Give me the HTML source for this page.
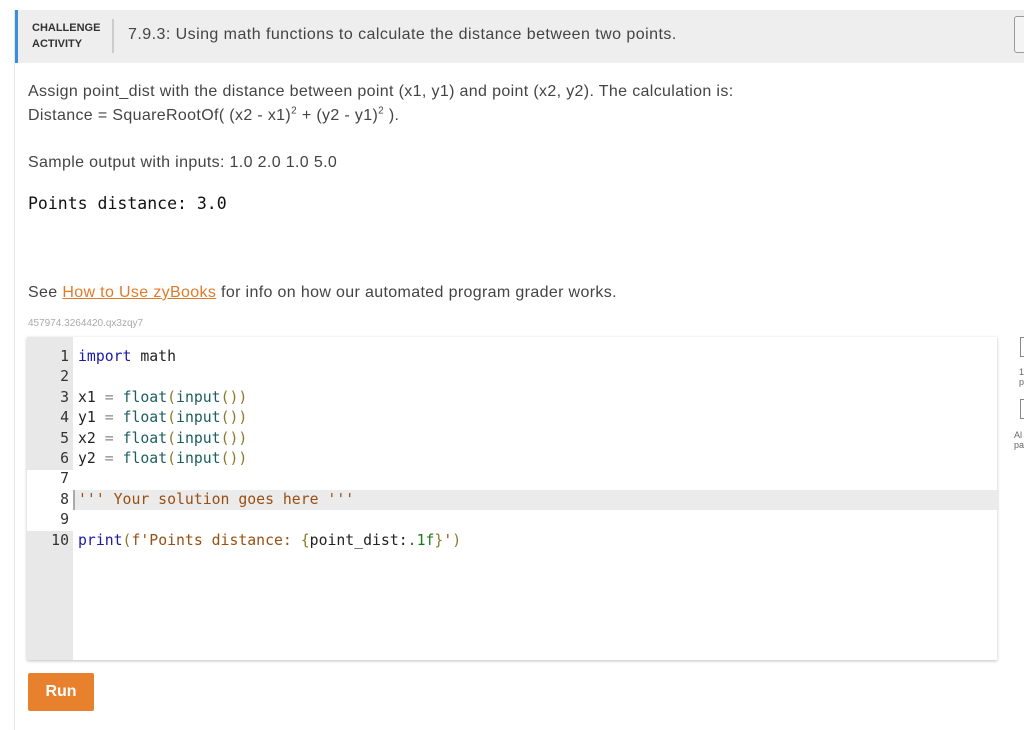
<!DOCTYPE html>
<html><head><style>
body{margin:0;width:1024px;height:720px;background:#fff;font-family:"Liberation Sans",sans-serif;overflow:hidden;position:relative;color:#333}
.card{position:absolute;left:14px;top:10px;width:1020px;height:720px;border-left:1px solid #e6e6e6}
.hdr{position:absolute;left:15px;top:10px;width:1009px;height:53px;background:#eeeeee;border-left:3px solid #3a8ee0;box-sizing:border-box}
.lab{position:absolute;left:14px;top:10px;font-size:11px;font-weight:bold;line-height:16px;color:#333}
.sep{position:absolute;left:94px;top:9px;width:2px;height:34px;background:#ccc}
.ttl{position:absolute;left:110px;top:16px;font-size:16px;color:#444;letter-spacing:0.45px}
.tb{position:absolute;left:1014px;top:16px;width:14px;height:35px;border:1px solid #999;border-radius:3px;background:#f4f4f4}
.t{position:absolute;left:28px;font-size:16px;color:#444;line-height:24px;letter-spacing:0.35px}
sup{font-size:10px;line-height:0}
.mono{font-family:"DejaVu Sans Mono","Liberation Mono",monospace;letter-spacing:0}
.ed{position:absolute;left:27px;top:337px;width:970px;height:323px;background:#fff;box-shadow:0 1px 3px rgba(0,0,0,.25)}
.gut{position:absolute;left:0;width:46px;background:#e8e8e8}
.ln{position:absolute;left:0;width:42px;text-align:right;font-size:14.8px;color:#333}
.cd{position:absolute;left:51px;font-size:14.8px;white-space:pre;color:#222}
.kw{color:#1a1aa6}.bi{color:#1c5e5e}.pa{color:#8a7a2a}.st{color:#9a4f12}.op{color:#888}
.run{position:absolute;left:28px;top:673px;width:66px;height:38px;background:#e8812e;color:#fff;font-weight:bold;font-size:16px;text-align:center;line-height:38px;border-radius:2px}
.side{position:absolute;left:1014px;font-size:9px;color:#666}
.bx{position:absolute;left:1020px;width:10px;height:18px;border:1px solid #888}
</style></head><body>
<div class="card"></div>
<div class="hdr">
<div class="lab">CHALLENGE<br>ACTIVITY</div>
<div class="sep"></div>
<div class="ttl">7.9.3: Using math functions to calculate the distance between two points.</div>
</div>
<div class="tb"></div>
<div class="t" style="top:80px">Assign point_dist with the distance between point (x1, y1) and point (x2, y2). The calculation is:<br>Distance = SquareRootOf( (x2 - x1)<sup>2</sup> + (y2 - y1)<sup>2</sup> ).</div>
<div class="t" style="top:151px">Sample output with inputs: 1.0 2.0 1.0 5.0</div>
<div class="t mono" style="top:192px;font-size:16.5px;color:#111">Points distance: 3.0</div>
<div class="t" style="top:281px">See <span style="color:#e07b2b;text-decoration:underline">How to Use zyBooks</span> for info on how our automated program grader works.</div>
<div class="t" style="top:317px;font-size:10px;color:#aaa;line-height:14px;letter-spacing:0">457974.3264420.qx3zqy7</div>
<div class="ed">
<div class="gut" style="top:0;height:133px"></div>
<div class="gut" style="top:194px;height:129px"></div>
<div style="position:absolute;left:46px;top:153px;width:924px;height:20px;background:#ebebeb;border-left:2px solid #aaa"></div>
<div class="ln mono" style="top:10px;line-height:20.4px">1<br>2<br>3<br>4<br>5<br>6<br>7<br>8<br>9<br>10</div>
<div class="cd mono" style="top:10px;line-height:20.4px"><span class="kw">import</span> math

x1 <span class="op">=</span> <span class="bi">float</span><span class="pa">(</span><span class="bi">input</span><span class="pa">())</span>
y1 <span class="op">=</span> <span class="bi">float</span><span class="pa">(</span><span class="bi">input</span><span class="pa">())</span>
x2 <span class="op">=</span> <span class="bi">float</span><span class="pa">(</span><span class="bi">input</span><span class="pa">())</span>
y2 <span class="op">=</span> <span class="bi">float</span><span class="pa">(</span><span class="bi">input</span><span class="pa">())</span>

<span class="st">''' Your solution goes here '''</span>

<span class="kw">print</span><span class="pa">(</span><span class="st">f'Points distance: </span><span class="pa">{</span>point_dist:<span style="color:#1a7a1a">.1f</span><span class="pa">}</span><span class="st">'</span><span class="pa">)</span></div>
</div>
<div class="bx" style="top:337px"></div>
<div class="side" style="top:367px;left:1019px">1<br>pa</div>
<div class="bx" style="top:399px"></div>
<div class="side" style="top:430px">Al<br>pa</div>
<div class="run">Run</div>
</body></html>
